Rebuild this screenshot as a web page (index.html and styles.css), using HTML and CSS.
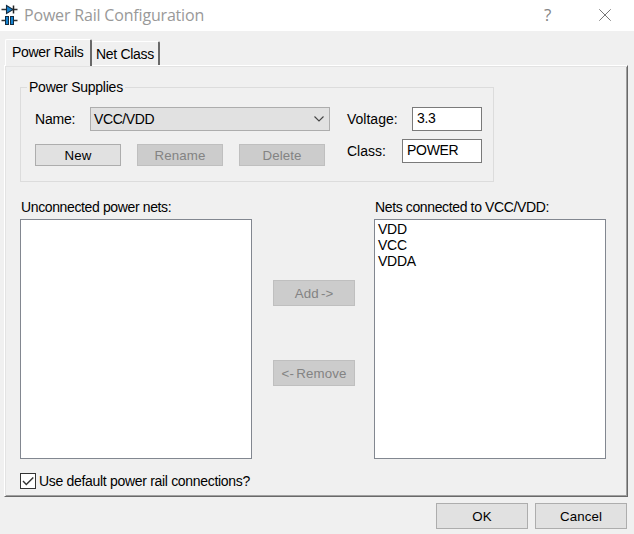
FILE: index.html
```html
<!DOCTYPE html>
<html lang="en">
<head>
<meta charset="utf-8">
<title>Power Rail Configuration</title>
<link rel="stylesheet" href="styles.css">
</head>
<body>
<div class="dialog">
  <header class="titlebar">
    <svg class="app-icon" viewBox="0 0 17 22" width="17" height="22">
      <path d="M0.500 5.500H16.500M0.500 16.500H6M11 16.500H16.500" stroke="#333" stroke-width="1.500" fill="none"/>
      <path d="M5.500 1.500V9.500L12 5.500Z" fill="#1583d2" stroke="#152c40" stroke-width="1.100"/>
      <path d="M12.500 1.500V9.500" stroke="#222" stroke-width="1.500"/>
      <rect x="4.500" y="12.500" width="3" height="8" fill="#1583d2" stroke="#152c40"/>
      <rect x="9.500" y="12.500" width="3" height="8" fill="#1583d2" stroke="#152c40"/>
    </svg>
    <h1 class="title">Power Rail Configuration</h1>
    <span class="help">?</span>
    <svg class="close" viewBox="0 0 12 12" width="12" height="12"><path d="M0.300 0.300L11.700 11.700M11.700 0.300L0.300 11.700" stroke="#777" fill="none"/></svg>
  </header>
  <nav class="tabs">
    <div class="tab active">Power Rails</div>
    <div class="tab">Net Class</div>
  </nav>
  <main class="panel">
    <section class="group">
      <h2 class="legend">Power Supplies</h2>
      <div class="supply">
        <div class="name-row">
          <span class="label">Name:</span>
          <div class="select"><span>VCC/VDD</span>
            <svg viewBox="0 0 10 6" width="10" height="6"><path d="M0.500 0.500L5 5L9.500 0.500" stroke="#444" stroke-width="1.100" fill="none"/></svg>
          </div>
        </div>
        <div class="actions">
          <button class="btn">New</button>
          <button class="btn" disabled>Rename</button>
          <button class="btn" disabled>Delete</button>
        </div>
      </div>
      <div class="values">
        <div class="value-row"><span class="label">Voltage:</span><div class="input voltage">3.3</div></div>
        <div class="value-row"><span class="label">Class:</span><div class="input class">POWER</div></div>
      </div>
    </section>
    <section class="nets">
      <div class="net-column">
        <h2 class="net-title">Unconnected power nets:</h2>
        <ul class="list"></ul>
      </div>
      <div class="transfer">
        <button class="btn" disabled>Add -&gt;</button>
        <button class="btn" disabled>&lt;- Remove</button>
      </div>
      <div class="net-column">
        <h2 class="net-title">Nets connected to VCC/VDD:</h2>
        <ul class="list"><li>VDD</li><li>VCC</li><li>VDDA</li></ul>
      </div>
    </section>
    <div class="check-row">
      <span class="checkbox"><svg viewBox="0 0 14 14" width="14" height="14"><path d="M2 7L5.300 10.500L12.300 3.500" stroke="#333" stroke-width="1.400" fill="none"/></svg></span>
      <span class="check-label">Use default power rail connections?</span>
    </div>
  </main>
  <footer class="footer">
    <button class="btn">OK</button>
    <button class="btn">Cancel</button>
  </footer>
</div>
</body>
</html>
```
FILE: styles.css
```css
* { box-sizing: border-box; }
body {
  margin: 0;
  font: 14px/16px "Liberation Sans", Arial, sans-serif;
  color: #000;
  background: #f0f0f0;
}
h1, h2, ul { margin: 0; padding: 0; font: inherit; list-style: none; }
.dialog { width: 634px; height: 534px; overflow: hidden; white-space: nowrap; }
.titlebar {
  display: flex;
  align-items: center;
  height: 31px;
  padding: 0 23px 0 1px;
  background: #fff;
  color: #999;
}
.app-icon { margin-top: -1px; }
.title { flex: 1; margin: -1px 0 0 6px; font: 16px/30px "Open Sans", "Noto Sans", sans-serif; letter-spacing: -0.18px; }
.help { width: 8px; margin: -2px 47px 0 0; font: 17px/30px "Open Sans", sans-serif; color: #858585; }
.close { margin-top: -1px; }
.tabs { display: flex; align-items: flex-end; height: 34px; padding-left: 5px; }
.tab {
  width: 68px;
  height: 24px;
  padding: 4px 0 0 4px;
  border-top: 1px solid #fff;
  border-right: 2px solid #696969;
  border-radius: 2px 2px 0 0;
  letter-spacing: -0.3px;
}
.tab.active {
  position: relative;
  z-index: 1;
  width: 87px;
  height: 27px;
  margin-bottom: -1px;
  padding: 4px 0 0 6px;
  border-left: 1px solid #fff;
  background: #f0f0f0;
}
.panel {
  width: 624px;
  height: 432px;
  margin-left: 4px;
  padding: 21px 15px 0;
  border: 1px solid;
  border-color: #fff #696969 #696969 #fff;
  box-shadow: inset 1px 1px #e3e3e3, inset -1px -1px #a0a0a0;
}
.group {
  position: relative;
  display: flex;
  width: 474px;
  height: 95px;
  padding: 19px 11px 0 14px;
  border: 1px solid #dcdcdc;
}
.legend { position: absolute; top: -9px; left: 6px; padding: 0 2px; background: #f0f0f0; letter-spacing: -0.24px; }
.supply { width: 312px; }
.name-row { display: flex; align-items: center; }
.name-row .label { width: 55px; letter-spacing: -0.2px; }
.select {
  display: flex;
  align-items: center;
  justify-content: space-between;
  width: 240px;
  height: 24px;
  padding: 0 5px 0 3px;
  border: 1px solid #adadad;
  background: #e1e1e1;
  letter-spacing: -0.4px;
}
.actions { display: flex; gap: 16px; margin-top: 13px; }
.btn {
  width: 86px;
  height: 22px;
  padding: 1px 0 0;
  border: 1px solid #adadad;
  background: #e1e1e1;
  color: #000;
  font: 13.3px/16px "Liberation Sans", Arial, sans-serif;
  letter-spacing: 0.1px;
  word-spacing: -1.5px;
}
.btn:disabled { border-color: #bfbfbf; background: #ccc; color: #838383; }
.values { width: 135px; }
.value-row { display: flex; align-items: center; justify-content: space-between; margin-bottom: 8px; }
.input { height: 24px; padding: 2px 0 0 4px; border: 1px solid #7a7a7a; background: #fff; letter-spacing: -0.3px; }
.voltage { width: 70px; }
.class { width: 80px; }
.nets { display: flex; margin-top: 17px; }
.net-column { width: 232px; }
.net-title { height: 20px; padding-left: 1px; letter-spacing: -0.37px; }
.list { height: 240px; padding: 1px 3px; border: 1px solid #828790; background: #fff; letter-spacing: -0.25px; }
.transfer { display: flex; flex-direction: column; gap: 54px; width: 122px; padding: 81px 0 0 21px; }
.transfer .btn { width: 82px; height: 26px; }
.check-row { display: flex; align-items: center; gap: 3px; margin-top: 14px; }
.checkbox { display: flex; width: 16px; height: 16px; border: 1px solid #333; background: #fff; }
.check-label { letter-spacing: -0.31px; }
.footer { display: flex; justify-content: flex-end; gap: 7px; padding: 6px 7px 0; }
.footer .btn { width: 92px; height: 26px; }
```
